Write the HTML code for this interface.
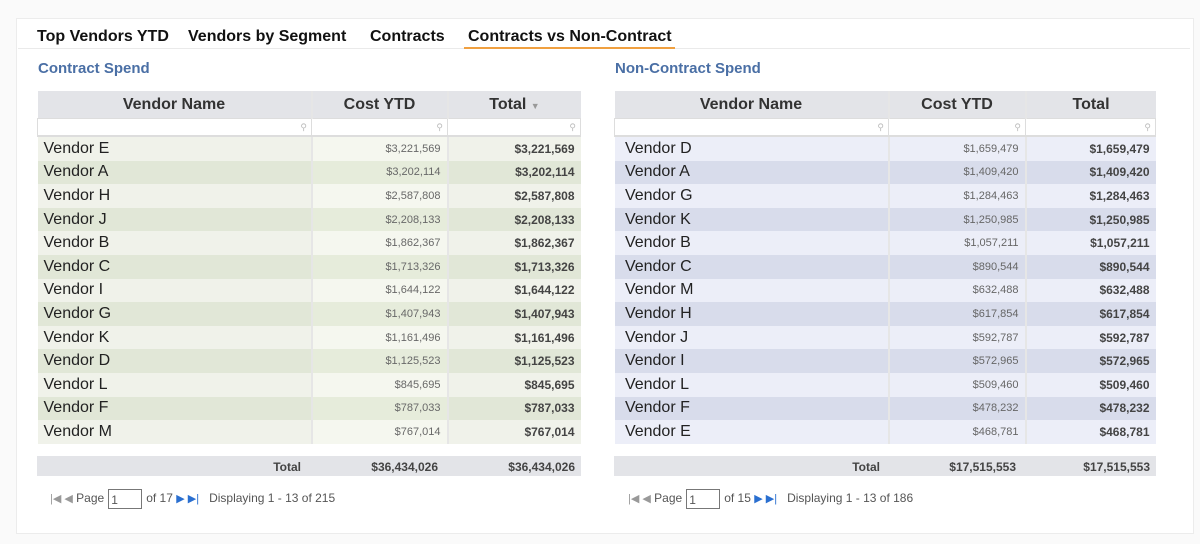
<!DOCTYPE html>
<html><head><style>
body{margin:0;width:1200px;height:544px;background:#fafafa;font-family:"Liberation Sans",sans-serif;position:relative;overflow:hidden}
.frame{position:absolute;left:16px;top:18px;width:1176px;height:514px;background:#fff;border:1px solid #ececec}
.tabs{position:absolute;left:37px;top:28px;font-weight:bold;font-size:16px;color:#111}
.tabs span{position:absolute;white-space:nowrap}
.tline{position:absolute;left:18px;top:48px;width:1172px;height:1px;background:#eaeaea}
.act{position:absolute;left:464px;top:47px;width:211px;height:2px;background:#f0a040}
.ttl{position:absolute;top:60px;font-weight:bold;font-size:15px;color:#4a6fa5}
table{position:absolute;border-collapse:collapse;font-size:16px;color:#222}
td,th{padding:0 6px;white-space:nowrap}
th{background:#e3e4e8;height:27px;font-size:16px;color:#333}
.f td{background:#fff;height:16px;border:1px solid #ddd;border-bottom:2px solid #ddd;font-size:9px;color:#bbb;text-align:right;padding:0 4px}
tr.r td{height:23.6px}
td.c{text-align:right;font-size:11px;color:#666}
td.t{text-align:right;font-size:12px;font-weight:bold;color:#444}
.L tr.r:nth-child(odd) td{background:#f0f2ea}.L tr.r:nth-child(even) td{background:#e1e7d7}
.R tr.r:nth-child(odd) td{background:#eceef8}.R tr.r:nth-child(even) td{background:#d8dceb}
.L tr.r td.c{filter:brightness(1.02)}
td+td,th+th{border-left:2px solid #e6e6e6}
.tot{position:absolute;height:20px;background:#e3e4e8;font-size:12px;font-weight:bold;color:#444}
.tot span{position:absolute;top:4px;text-align:right}
.pg{position:absolute;font-size:12px;color:#555;top:489px}
.pg .b{display:inline-block;width:34px;height:20px;border:1px solid #777;vertical-align:middle;font-size:12px;line-height:20px;padding-left:2px;box-sizing:border-box;margin:0 4px}
.ic{color:#999;font-size:11px}.icb{color:#2a6fd0;font-size:11px}
</style></head><body>
<div class="frame"></div>
<div class="tline"></div><div class="act"></div>
<div class="tabs"><span style="left:0">Top Vendors YTD</span><span style="left:151px">Vendors by Segment</span><span style="left:333px">Contracts</span><span style="left:431px">Contracts vs Non-Contract</span></div>
<div class="ttl" style="left:38px">Contract Spend</div>
<div class="ttl" style="left:615px">Non-Contract Spend</div>

<table class="L" style="left:37px;top:91px;width:544px">
<tr><th style="width:261px">Vendor Name</th><th style="width:122px">Cost YTD</th><th>Total <span style="font-size:9px;color:#999">▼</span></th></tr>
<tr class="f"><td>⚲</td><td>⚲</td><td>⚲</td></tr>
<tr class="r"><td>Vendor E</td><td class="c">$3,221,569</td><td class="t">$3,221,569</td></tr>
<tr class="r"><td>Vendor A</td><td class="c">$3,202,114</td><td class="t">$3,202,114</td></tr>
<tr class="r"><td>Vendor H</td><td class="c">$2,587,808</td><td class="t">$2,587,808</td></tr>
<tr class="r"><td>Vendor J</td><td class="c">$2,208,133</td><td class="t">$2,208,133</td></tr>
<tr class="r"><td>Vendor B</td><td class="c">$1,862,367</td><td class="t">$1,862,367</td></tr>
<tr class="r"><td>Vendor C</td><td class="c">$1,713,326</td><td class="t">$1,713,326</td></tr>
<tr class="r"><td>Vendor I</td><td class="c">$1,644,122</td><td class="t">$1,644,122</td></tr>
<tr class="r"><td>Vendor G</td><td class="c">$1,407,943</td><td class="t">$1,407,943</td></tr>
<tr class="r"><td>Vendor K</td><td class="c">$1,161,496</td><td class="t">$1,161,496</td></tr>
<tr class="r"><td>Vendor D</td><td class="c">$1,125,523</td><td class="t">$1,125,523</td></tr>
<tr class="r"><td>Vendor L</td><td class="c">$845,695</td><td class="t">$845,695</td></tr>
<tr class="r"><td>Vendor F</td><td class="c">$787,033</td><td class="t">$787,033</td></tr>
<tr class="r"><td>Vendor M</td><td class="c">$767,014</td><td class="t">$767,014</td></tr>
</table>
<div class="tot" style="left:37px;top:456px;width:544px"><span style="right:280px">Total</span><span style="right:143px">$36,434,026</span><span style="right:6px">$36,434,026</span></div>
<div class="pg" style="left:50px"><span class="ic">|◀ ◀</span> Page<span class="b">1</span>of 17 <span class="icb">▶ ▶|</span>&nbsp;&nbsp; Displaying 1 - 13 of 215</div>

<table class="R" style="left:614px;top:91px;width:542px">
<tr><th style="width:261px">Vendor Name</th><th style="width:123px">Cost YTD</th><th>Total</th></tr>
<tr class="f"><td>⚲</td><td>⚲</td><td>⚲</td></tr>
<tr class="r"><td>&nbsp;Vendor D</td><td class="c">$1,659,479</td><td class="t">$1,659,479</td></tr>
<tr class="r"><td>&nbsp;Vendor A</td><td class="c">$1,409,420</td><td class="t">$1,409,420</td></tr>
<tr class="r"><td>&nbsp;Vendor G</td><td class="c">$1,284,463</td><td class="t">$1,284,463</td></tr>
<tr class="r"><td>&nbsp;Vendor K</td><td class="c">$1,250,985</td><td class="t">$1,250,985</td></tr>
<tr class="r"><td>&nbsp;Vendor B</td><td class="c">$1,057,211</td><td class="t">$1,057,211</td></tr>
<tr class="r"><td>&nbsp;Vendor C</td><td class="c">$890,544</td><td class="t">$890,544</td></tr>
<tr class="r"><td>&nbsp;Vendor M</td><td class="c">$632,488</td><td class="t">$632,488</td></tr>
<tr class="r"><td>&nbsp;Vendor H</td><td class="c">$617,854</td><td class="t">$617,854</td></tr>
<tr class="r"><td>&nbsp;Vendor J</td><td class="c">$592,787</td><td class="t">$592,787</td></tr>
<tr class="r"><td>&nbsp;Vendor I</td><td class="c">$572,965</td><td class="t">$572,965</td></tr>
<tr class="r"><td>&nbsp;Vendor L</td><td class="c">$509,460</td><td class="t">$509,460</td></tr>
<tr class="r"><td>&nbsp;Vendor F</td><td class="c">$478,232</td><td class="t">$478,232</td></tr>
<tr class="r"><td>&nbsp;Vendor E</td><td class="c">$468,781</td><td class="t">$468,781</td></tr>
</table>
<div class="tot" style="left:614px;top:456px;width:542px"><span style="right:276px">Total</span><span style="right:140px">$17,515,553</span><span style="right:6px">$17,515,553</span></div>
<div class="pg" style="left:628px"><span class="ic">|◀ ◀</span> Page<span class="b">1</span>of 15 <span class="icb">▶ ▶|</span>&nbsp;&nbsp; Displaying 1 - 13 of 186</div>
</body></html>
